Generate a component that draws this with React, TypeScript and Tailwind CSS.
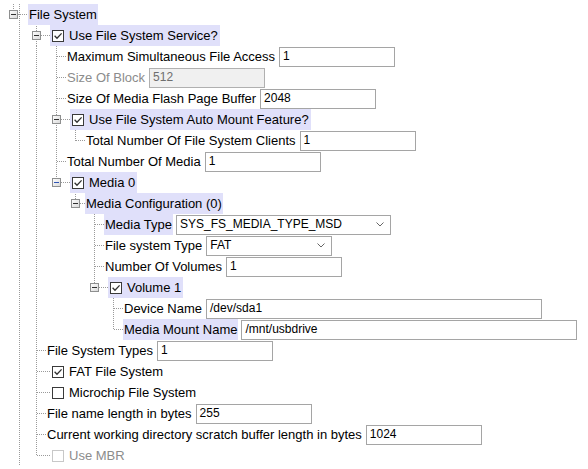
import React from "react";

const LINE = "#9a9a9a";

type Field = { kind: "input" | "select" | "disabled"; value: string; w: string };
type Node = {
  x: number;
  guides: number[];
  last?: boolean;
  box?: boolean;
  blue?: boolean;
  check?: "on" | "off" | "disabled";
  text: string;
  hl?: boolean;
  gray?: boolean;
  field?: Field;
  start?: number;
};

const inp = (value: string, w = "w-[116px]"): Field => ({ kind: "input", value, w });

const rows: Node[] = [
  { x: 13, guides: [19], box: true, last: true, text: "File System", hl: true, start: 28 },
  { x: 36, guides: [19], box: true, check: "on", text: "Use File System Service?", hl: true },
  { x: 56, guides: [19, 36], text: "Maximum Simultaneous File Access", field: inp("1") },
  { x: 56, guides: [19, 36], text: "Size Of Block", gray: true, field: { kind: "disabled", value: "512", w: "w-[116px]" } },
  { x: 56, guides: [19, 36], text: "Size Of Media Flash Page Buffer", field: inp("2048") },
  { x: 56, guides: [19, 36], box: true, check: "on", text: "Use File System Auto Mount Feature?", hl: true },
  { x: 75, guides: [19, 36, 56], last: true, text: "Total Number Of File System Clients", field: inp("1") },
  { x: 56, guides: [19, 36], text: "Total Number Of Media", field: inp("1") },
  { x: 56, guides: [19, 36], box: true, blue: true, last: true, check: "on", text: "Media 0", hl: true },
  { x: 75, guides: [19, 36], box: true, last: true, text: "Media Configuration (0)", hl: true },
  { x: 94, guides: [19, 36], text: "Media Type", hl: true, field: { kind: "select", value: "SYS_FS_MEDIA_TYPE_MSD", w: "w-[215px]" } },
  { x: 94, guides: [19, 36], text: "File system Type", field: { kind: "select", value: "FAT", w: "w-[126px]" } },
  { x: 94, guides: [19, 36], text: "Number Of Volumes", field: inp("1") },
  { x: 94, guides: [19, 36], box: true, last: true, check: "on", text: "Volume 1", hl: true },
  { x: 113, guides: [19, 36], text: "Device Name", field: inp("/dev/sda1", "w-[336px]") },
  { x: 113, guides: [19, 36], last: true, text: "Media Mount Name", hl: true, field: inp("/mnt/usbdrive", "w-[336px]") },
  { x: 36, guides: [19], text: "File System Types", field: inp("1") },
  { x: 36, guides: [19], check: "on", text: "FAT File System" },
  { x: 36, guides: [19], check: "off", text: "Microchip File System" },
  { x: 36, guides: [19], text: "File name length in bytes", field: inp("255") },
  { x: 36, guides: [19], text: "Current working directory scratch buffer length in bytes", field: inp("1024") },
  { x: 36, guides: [19], last: true, check: "disabled", text: "Use MBR", gray: true },
];

function Guides({ n, idx, width }: { n: Node; idx: number; width: number }) {
  const off = idx % 2;
  const v = (x: number, y1: number, y2: number, k: string) => (
    <line key={k} x1={x + 0.5} x2={x + 0.5} y1={y1} y2={y2} stroke={LINE} strokeDasharray="1 1" strokeDashoffset={off} />
  );
  const x = n.x;
  return (
    <svg width={width} height={21} className="block shrink-0" shapeRendering="crispEdges">
      {n.guides.map((g) => v(g, 0, 21, "g" + g))}
      {n.box ? (
        <>
          {v(x, 0, 6, "top")}
          {!n.last && v(x, 15, 21, "bot")}
        </>
      ) : (
        v(x, 0, n.last ? 11 : 21, "own")
      )}
      <line x1={n.box ? x + 5 : x + 1} x2={width} y1={10.5} y2={10.5} stroke={LINE} strokeDasharray="1 1" />
      {n.box && (
        <>
          <defs>
            <linearGradient id={"bg" + idx} x1="0" y1="0" x2="1" y2="1">
              <stop offset="0" stopColor="#ffffff" />
              <stop offset="1" stopColor="#d8d8d8" />
            </linearGradient>
          </defs>
          <rect x={x - 4 + 0.5} y={6.5} width={8} height={8} fill={`url(#bg${idx})`} stroke="#8e8f8f" />
          <line x1={x - 2} x2={x + 3} y1={10.5} y2={10.5} stroke={n.blue ? "#2f55b4" : "#303030"} />
        </>
      )}
    </svg>
  );
}

function Check({ state }: { state: "on" | "off" | "disabled" }) {
  const border = state === "disabled" ? "#c8c8c8" : "#3a3a3a";
  return (
    <svg width={12} height={12} className="block shrink-0" shapeRendering="geometricPrecision">
      <rect x={0.5} y={0.5} width={11} height={11} fill="#ffffff" stroke={border} shapeRendering="crispEdges" />
      {state === "on" && <path d="M2.6 5.8 L5 8.3 L9.6 3.4" fill="none" stroke="#333333" strokeWidth={1.3} />}
    </svg>
  );
}

function FieldBox({ f }: { f: Field }) {
  if (f.kind === "select") {
    return (
      <div className={`${f.w} ml-[3px] h-[20px] shrink-0 border border-[#a5a5a5] bg-white pl-[3px] pr-[6px] text-[12px] flex items-center justify-between text-black`}>
        <span>{f.value}</span>
        <svg width={8} height={5} className="block">
          <path d="M0.5 0.5 L4 4 L7.5 0.5" fill="none" stroke="#666666" />
        </svg>
      </div>
    );
  }
  const dis = f.kind === "disabled";
  return (
    <div
      className={`${f.w} ml-[3px] h-[20px] shrink-0 border pl-[3px] text-[12px] flex items-center ${
        dis ? "bg-[#f0f0f0] border-[#b0b0b0] text-[#6e6e6e]" : "bg-white border-[#a5a5a5] text-black"
      }`}
    >
      {f.value}
    </div>
  );
}

function Row({ n, idx }: { n: Node; idx: number }) {
  const start = n.start ?? (n.check ? n.x + 14 : n.x + 10);
  const textCls = n.gray ? "text-[#8c8c8c]" : "text-black";
  return (
    <div className="flex h-[21px] items-center whitespace-nowrap">
      <Guides n={n} idx={idx} width={start} />
      {n.check ? (
        <div className={`flex h-[21px] items-center pl-[2px] pr-[2px] ${n.hl ? "bg-[#e0e0fa]" : ""}`}>
          <Check state={n.check} />
          <span className={`ml-[5px] ${textCls}`}>{n.text}</span>
        </div>
      ) : (
        <span className={`flex h-[21px] items-center px-[1px] ${textCls} ${n.hl ? "bg-[#e0e0fa]" : ""}`}>{n.text}</span>
      )}
      {n.field && <FieldBox f={n.field} />}
    </div>
  );
}

export default function App() {
  return (
    <div className="w-[588px] h-[469px] overflow-hidden bg-white pt-[4px] font-['Liberation_Sans',Arial,sans-serif] text-[13px] leading-[21px]">
      {rows.map((n, i) => (
        <Row key={i} n={n} idx={i} />
      ))}
    </div>
  );
}
